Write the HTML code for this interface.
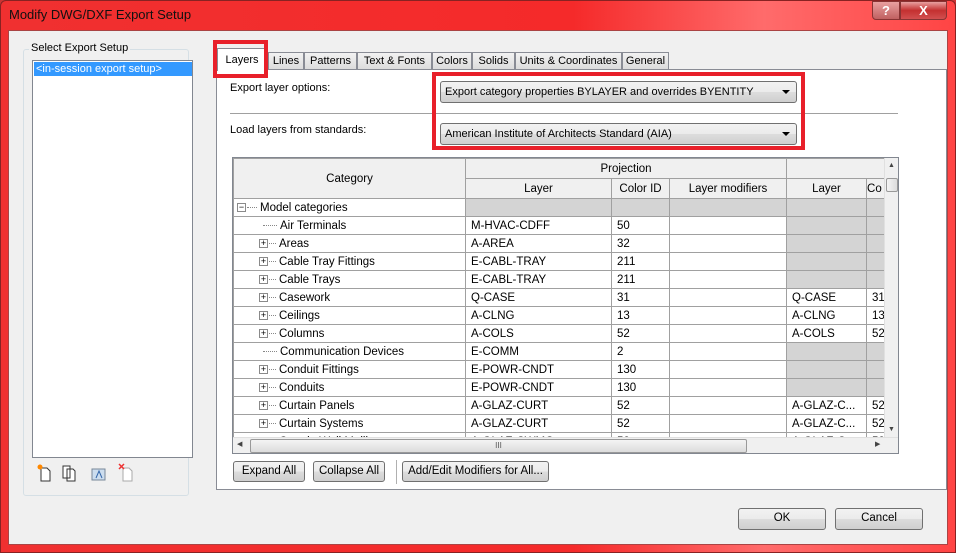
<!DOCTYPE html>
<html><head><style>
*{box-sizing:border-box;margin:0;padding:0}
body{width:956px;height:553px;overflow:hidden;background:#c33;font-family:"Liberation Sans",sans-serif;font-size:11.5px;color:#000;position:relative}
.a{position:absolute}
.frame{left:0;top:0;width:956px;height:553px;background:linear-gradient(90deg,#f03030 0%,#f52a2a 60%,#ff6b6b 80%,#f44 100%);border:1px solid #822;border-radius:6px 6px 0 0}
.client{left:8px;top:30px;width:940px;height:515px;background:#f0f0f0;border:1px solid #a44}
.btn{position:absolute;border:1px solid #707070;border-radius:3px;background:linear-gradient(#f2f2f2,#ebebeb 50%,#dcdcdc 51%,#cfcfcf);text-align:center;line-height:19px}
.tab{position:absolute;top:52px;height:17px;border:1px solid #898c95;border-bottom:none;background:linear-gradient(#f2f2f2,#dcdcdc);text-align:center;line-height:16px;font-size:11px;white-space:nowrap;overflow:hidden}
.hatch{background:repeating-conic-gradient(#a8a8a8 0 25%,#fff 0 50%) 0 0/2px 2px}
table{border-collapse:collapse;table-layout:fixed}
td{border:1px solid #a0a0a0;height:18px;padding:0 0 0 5px;white-space:nowrap;overflow:hidden;line-height:16px}
th{border:1px solid #a0a0a0;font-weight:normal;background:#f0f0f0;height:20px;line-height:18px}
.pl{display:inline-block;width:9px;height:9px;border:1px solid #8a8a8a;background:#fff;font-size:9px;line-height:6px;text-align:center;vertical-align:middle;margin-right:1px}
.dot{display:inline-block;width:10px;border-top:1px dotted #888;vertical-align:middle;margin-right:3px}
.sel{position:absolute;border:1px solid #707070;border-radius:3px;background:linear-gradient(#f2f2f2,#ebebeb 50%,#dddddd 51%,#cfcfcf);line-height:20px;padding-left:4px;font-size:11px}
.sel:after{content:"";position:absolute;right:6px;top:8px;border:4px solid transparent;border-top:4px solid #000;border-bottom:none}
</style></head><body>
<div class="a frame"></div>
<div class="a" style="left:9px;top:7px;font-size:13px;color:#111">Modify DWG/DXF Export Setup</div>
<div class="a" style="left:872px;top:1px;width:28px;height:19px;border:1px solid #833;border-radius:0 0 0 4px;background:linear-gradient(#e9a0a0,#c06060);color:#fff;text-align:center;font-weight:bold;font-size:13px;line-height:18px">?</div>
<div class="a" style="left:900px;top:1px;width:47px;height:19px;border:1px solid #833;border-radius:0 0 4px 0;background:linear-gradient(#e8a0a0,#c43030 50%,#d25050);color:#fff;text-align:center;font-weight:bold;font-size:13px;line-height:18px">X</div>
<div class="a client"></div>
<div class="a" style="left:23px;top:49px;width:166px;height:447px;border:1px solid #d5dfe5;border-radius:3px"></div>
<div class="a" style="left:29px;top:42px;background:#f0f0f0;padding:0 2px;font-size:11px">Select Export Setup</div>
<div class="a" style="left:32px;top:60px;width:161px;height:398px;background:#fff;border:1px solid #828790"></div>
<div class="a" style="left:34px;top:62px;width:158px;height:14px;background:#3399ff;color:#fff;line-height:14px;padding-left:2px;font-size:11px">&lt;in-session export setup&gt;</div>
<svg class="a" style="left:36px;top:463px" width="110" height="20">
<path d="M5 5h6l3 3v10H5z" fill="#fff" stroke="#333"/><circle cx="4" cy="4" r="2.5" fill="#f80"/>
<path d="M27 3h7v12h-7z M31 6h6l2 2v10h-8z" fill="#fff" stroke="#333"/>
<rect x="56" y="6" width="13" height="11" fill="#cde" stroke="#789"/><path d="M60 15l3-7 3 7" stroke="#36a" fill="none"/>
<path d="M87 5h6l3 3v10h-9z" fill="#fff" stroke="#aaa"/><path d="M83 1l5 5M88 1l-5 5" stroke="#e33" stroke-width="1.5"/>
</svg>
<div class="a" style="left:216px;top:69px;width:731px;height:421px;background:#fff;border:1px solid #898c95"></div>
<div class="tab" style="left:268px;width:36px">Lines</div>
<div class="tab" style="left:304px;width:53px">Patterns</div>
<div class="tab" style="left:357px;width:75px">Text &amp; Fonts</div>
<div class="tab" style="left:432px;width:40px">Colors</div>
<div class="tab" style="left:472px;width:43px">Solids</div>
<div class="tab" style="left:515px;width:107px">Units &amp; Coordinates</div>
<div class="tab" style="left:622px;width:47px">General</div>
<div class="a" style="left:217px;top:48px;width:50px;height:23px;background:#fff;border:1px solid #898c95;border-bottom:none;text-align:center;line-height:22px;font-size:11px">Layers</div>
<div class="a" style="left:213px;top:40px;width:55px;height:38px;border:4px solid #e8202a"></div>
<div class="a" style="left:230px;top:82px;font-size:11px">Export layer options:</div>
<div class="a" style="left:230px;top:113px;width:668px;height:1px;background:#a0a0a0"></div>
<div class="a" style="left:230px;top:124px;font-size:11px">Load layers from standards:</div>
<div class="sel" style="left:440px;top:81px;width:357px;height:22px">Export category properties BYLAYER and overrides BYENTITY</div>
<div class="sel" style="left:440px;top:123px;width:357px;height:22px">American Institute of Architects Standard (AIA)</div>
<div class="a" style="left:432px;top:72px;width:373px;height:78px;border:4px solid #e8202a"></div>
<div class="a" style="left:232px;top:157px;width:667px;height:297px;border:1px solid #828790;overflow:hidden;background:#fff">
<table style="width:691px">
<colgroup><col style="width:232px"><col style="width:146px"><col style="width:58px"><col style="width:117px"><col style="width:80px"><col style="width:58px"></colgroup>
<tr><th rowspan="2" style="height:40px">Category</th><th colspan="3">Projection</th><th colspan="2"></th></tr>
<tr><th>Layer</th><th>Color ID</th><th>Layer modifiers</th><th>Layer</th><th style="text-align:left">Co</th></tr>
<tr><td style="padding-left:3px"><span class="pl">−</span><span class="dot"></span>Model categories</td><td class="hatch"></td><td class="hatch"></td><td class="hatch"></td><td class="hatch"></td><td class="hatch"></td></tr>
<tr><td style="padding-left:29px"><span class="dot" style="width:14px"></span>Air Terminals</td><td>M-HVAC-CDFF</td><td>50</td><td></td><td class="hatch"></td><td class="hatch"></td></tr>
<tr><td style="padding-left:25px"><span class="pl">+</span><span class="dot" style="width:7px"></span>Areas</td><td>A-AREA</td><td>32</td><td></td><td class="hatch"></td><td class="hatch"></td></tr>
<tr><td style="padding-left:25px"><span class="pl">+</span><span class="dot" style="width:7px"></span>Cable Tray Fittings</td><td>E-CABL-TRAY</td><td>211</td><td></td><td class="hatch"></td><td class="hatch"></td></tr>
<tr><td style="padding-left:25px"><span class="pl">+</span><span class="dot" style="width:7px"></span>Cable Trays</td><td>E-CABL-TRAY</td><td>211</td><td></td><td class="hatch"></td><td class="hatch"></td></tr>
<tr><td style="padding-left:25px"><span class="pl">+</span><span class="dot" style="width:7px"></span>Casework</td><td>Q-CASE</td><td>31</td><td></td><td>Q-CASE</td><td>31</td></tr>
<tr><td style="padding-left:25px"><span class="pl">+</span><span class="dot" style="width:7px"></span>Ceilings</td><td>A-CLNG</td><td>13</td><td></td><td>A-CLNG</td><td>13</td></tr>
<tr><td style="padding-left:25px"><span class="pl">+</span><span class="dot" style="width:7px"></span>Columns</td><td>A-COLS</td><td>52</td><td></td><td>A-COLS</td><td>52</td></tr>
<tr><td style="padding-left:29px"><span class="dot" style="width:14px"></span>Communication Devices</td><td>E-COMM</td><td>2</td><td></td><td class="hatch"></td><td class="hatch"></td></tr>
<tr><td style="padding-left:25px"><span class="pl">+</span><span class="dot" style="width:7px"></span>Conduit Fittings</td><td>E-POWR-CNDT</td><td>130</td><td></td><td class="hatch"></td><td class="hatch"></td></tr>
<tr><td style="padding-left:25px"><span class="pl">+</span><span class="dot" style="width:7px"></span>Conduits</td><td>E-POWR-CNDT</td><td>130</td><td></td><td class="hatch"></td><td class="hatch"></td></tr>
<tr><td style="padding-left:25px"><span class="pl">+</span><span class="dot" style="width:7px"></span>Curtain Panels</td><td>A-GLAZ-CURT</td><td>52</td><td></td><td>A-GLAZ-C...</td><td>52</td></tr>
<tr><td style="padding-left:25px"><span class="pl">+</span><span class="dot" style="width:7px"></span>Curtain Systems</td><td>A-GLAZ-CURT</td><td>52</td><td></td><td>A-GLAZ-C...</td><td>52</td></tr>
<tr><td style="padding-left:25px"><span class="pl">+</span><span class="dot" style="width:7px"></span>Curtain Wall Mullions</td><td>A-GLAZ-CWMG</td><td>52</td><td></td><td>A-GLAZ-C...</td><td>52</td></tr>
</table>
<div class="a" style="left:651px;top:0;width:15px;height:279px;background:#f0f0f0;border-left:1px solid #e0e0e0"></div>
<div class="a" style="left:653px;top:20px;width:12px;height:14px;border:1px solid #999;border-radius:2px;background:linear-gradient(90deg,#f4f4f4,#dcdcdc)"></div>
<div class="a" style="left:655px;top:4px;font-size:7px;color:#444">▲</div>
<div class="a" style="left:655px;top:268px;font-size:7px;color:#444">▼</div>
<div class="a" style="left:0;top:279px;width:666px;height:17px;background:#f0f0f0;border-top:1px solid #e0e0e0"></div>
<div class="a" style="left:4px;top:282px;font-size:7px;color:#444">◀</div>
<div class="a" style="left:642px;top:282px;font-size:7px;color:#444">▶</div>
<div class="a" style="left:17px;top:281px;width:497px;height:14px;border:1px solid #999;border-radius:2px;background:linear-gradient(#f4f4f4,#dcdcdc);text-align:center;font-size:8px;line-height:12px;color:#555">III</div>
</div>
<div class="btn" style="left:233px;top:461px;width:72px;height:21px">Expand All</div>
<div class="btn" style="left:313px;top:461px;width:72px;height:21px">Collapse All</div>
<div class="a" style="left:396px;top:460px;width:1px;height:24px;background:#b0b0b0"></div>
<div class="btn" style="left:402px;top:461px;width:147px;height:21px">Add/Edit Modifiers for All...</div>
<div class="btn" style="left:738px;top:508px;width:88px;height:22px">OK</div>
<div class="btn" style="left:835px;top:508px;width:88px;height:22px">Cancel</div>
</body></html>
